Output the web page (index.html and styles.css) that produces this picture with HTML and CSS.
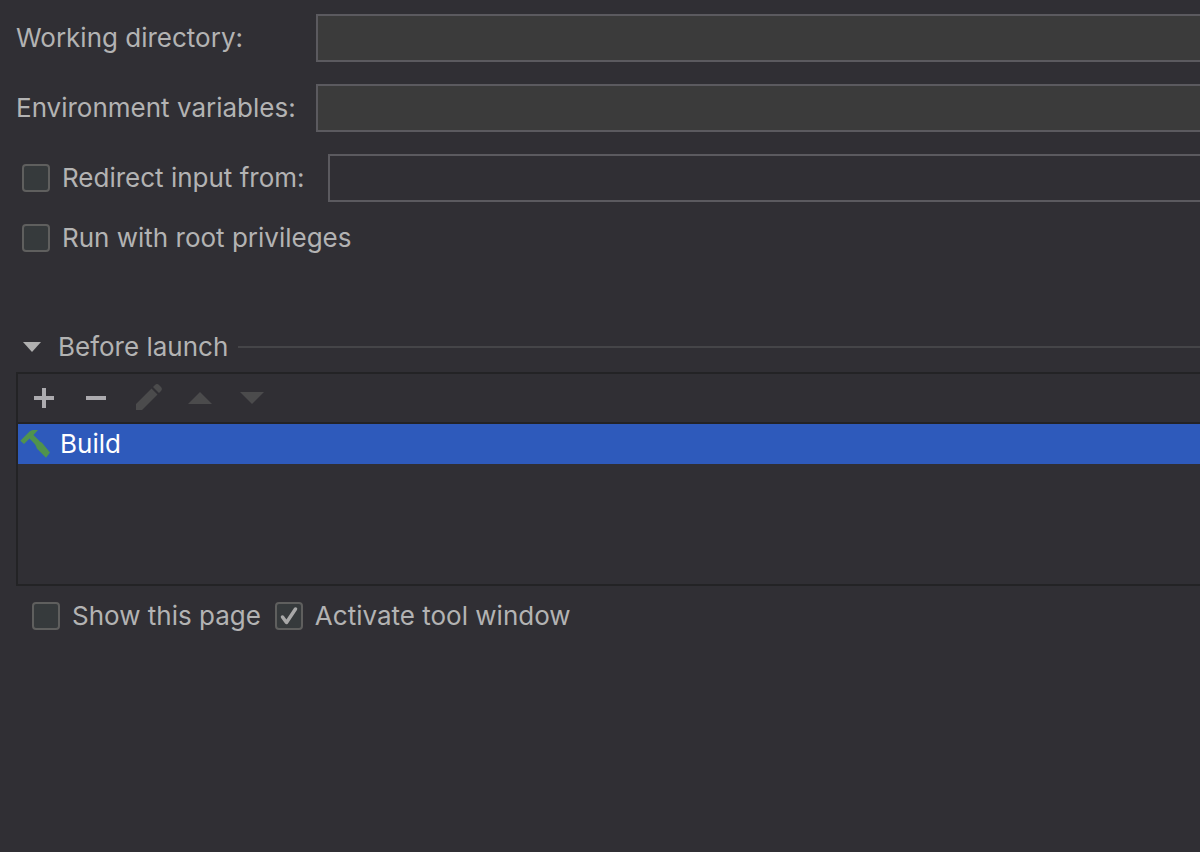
FILE: index.html
```html
<!DOCTYPE html>
<html lang="en">
<head>
<meta charset="utf-8">
<title>Run Configuration</title>
<link rel="stylesheet" href="styles.css">
</head>
<body>
<main class="settings">
  <form class="form">
    <div class="field">
      <label class="field-label" for="workdir">Working directory:</label>
      <input class="text-box" id="workdir" type="text">
    </div>
    <div class="field">
      <label class="field-label" for="env">Environment variables:</label>
      <input class="text-box" id="env" type="text">
    </div>
    <div class="field field-redirect">
      <label class="option"><input class="check" type="checkbox">Redirect input from:</label>
      <input class="text-box text-box-off" type="text" aria-label="Input file">
    </div>
    <label class="option option-root"><input class="check" type="checkbox">Run with root privileges</label>
  </form>

  <section class="launch">
    <h2 class="launch-title">
      <button class="toggle" type="button" aria-expanded="true">
        <svg class="toggle-icon" width="20" height="12" viewBox="0 0 20 12" aria-hidden="true"><path d="M1 1H19L10 11Z"/></svg>
        Before launch
      </button>
    </h2>
    <div class="panel">
      <div class="toolbar">
        <button class="tool" type="button" aria-label="Add"><svg width="32" height="32" viewBox="0 0 32 32"><path d="M14 6h4v8h8v4h-8v8h-4v-8H6v-4h8z"/></svg></button>
        <button class="tool" type="button" aria-label="Remove"><svg width="32" height="32" viewBox="0 0 32 32"><path d="M6 14h20v4H6z"/></svg></button>
        <button class="tool" type="button" aria-label="Edit" disabled><svg width="32" height="32" viewBox="0 0 32 32"><path d="M4 22 19.500 6.500 25.500 12.500 10 28H4zM21 5l2-2c1.200-1.200 2.800-1.200 4 0l2 2c1.200 1.200 1.200 2.800 0 4l-2 2z"/></svg></button>
        <button class="tool" type="button" aria-label="Move up" disabled><svg width="32" height="32" viewBox="0 0 32 32"><path d="M4 22 16 10 28 22z"/></svg></button>
        <button class="tool" type="button" aria-label="Move down" disabled><svg width="32" height="32" viewBox="0 0 32 32"><path d="M4 10H28L16 22z"/></svg></button>
      </div>
      <ul class="tasks">
        <li class="task">
          <svg class="task-icon" width="32" height="32" viewBox="0 0 32 32" aria-hidden="true"><path d="M2.300 12.700 11.500 3.500Q13 2 15 2H20L15.500 7 20.500 12Q21.500 13.500 24 14.800L32 24.500 28 29.700 18.800 20.500Q18.500 18 16.500 15.700L11.500 10.500 6 16z"/></svg>
          Build
        </li>
      </ul>
    </div>
    <div class="options">
      <label class="option"><input class="check" type="checkbox">Show this page</label>
      <label class="option"><input class="check" type="checkbox" checked>Activate tool window</label>
    </div>
  </section>
</main>
</body>
</html>
```

FILE: styles.css
```css
* {
  box-sizing: border-box;
}

body {
  margin: 0;
  background: #302f34;
  color: #b3b3b3;
  font: 26px/32px Inter, "Liberation Sans", sans-serif;
}

button,
input {
  font: inherit;
  color: inherit;
}

.settings {
  padding: 14px 0 14px 16px;
}

.form {
  display: flex;
  flex-direction: column;
  gap: 22px;
}

.field {
  display: flex;
  align-items: center;
}

.field-label {
  flex: 0 0 300px;
  white-space: nowrap;
}

.field-redirect .option {
  flex: 0 0 306px;
}

.text-box {
  flex: 1;
  min-width: 0;
  height: 48px;
  padding: 0 10px;
  border: 2px solid #5b5a5f;
  border-right: 0;
  border-radius: 0;
  background: #3b3b3b;
  outline: 0;
}

.text-box-off {
  background: transparent;
}

.option {
  display: flex;
  align-items: center;
  gap: 12px;
  white-space: nowrap;
}

.form .option {
  margin-left: 6px;
}

.form .option-root {
  margin-top: -2px;
}

.check {
  appearance: none;
  flex: none;
  width: 28px;
  height: 28px;
  margin: 0;
  border: 2px solid #5f5f5e;
  border-radius: 4px;
  background: #363a3c;
}

.check:checked {
  background: #363a3c url("data:image/svg+xml,%3Csvg xmlns='http://www.w3.org/2000/svg' viewBox='0 0 24 24'%3E%3Cpath d='M5.500 13 9.500 18.500 18.500 5' fill='none' stroke='%23a8a8a8' stroke-width='3.500' stroke-linecap='round' stroke-linejoin='round'/%3E%3C/svg%3E");
}

.launch {
  margin-top: 77px;
}

.launch-title {
  display: flex;
  align-items: center;
  gap: 10px;
  margin: 0 0 9px;
  font: inherit;
}

.launch-title::after {
  content: "";
  flex: 1;
  height: 2px;
  background: #454548;
}

.toggle {
  display: flex;
  align-items: center;
  gap: 16px;
  padding: 0 0 0 6px;
  border: 0;
  background: none;
}

.toggle-icon {
  fill: #b0b0b0;
}

.panel {
  min-height: 214px;
  border: 2px solid #232325;
  border-right: 0;
}

.toolbar {
  display: flex;
  gap: 20px;
  padding: 8px 10px;
  border-bottom: 2px solid #232325;
}

.tool {
  display: flex;
  padding: 0;
  border: 0;
  background: none;
  fill: #acabaf;
}

.tool:disabled {
  fill: #4b4b4c;
}

.tasks {
  margin: 0;
  padding: 0;
  list-style: none;
}

.task {
  display: flex;
  align-items: center;
  gap: 10px;
  height: 40px;
  background: #2e5abb;
  color: #fff;
}

.task-icon {
  fill: #50934d;
}

.options {
  display: flex;
  gap: 14px;
  padding: 14px 16px;
}
```
